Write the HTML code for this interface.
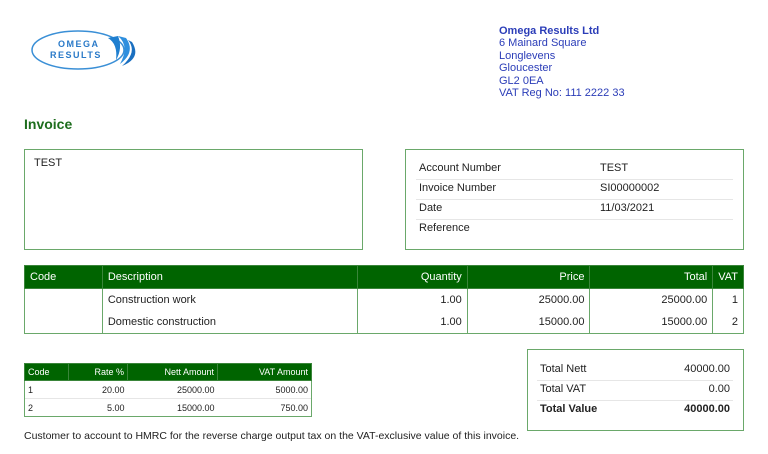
<!DOCTYPE html>
<html><head><style>
*{margin:0;padding:0;box-sizing:border-box}
body{width:768px;height:454px;background:#fff;font-family:"Liberation Sans",Arial,sans-serif;font-size:11px;color:#222;position:relative;overflow:hidden}
.a{position:absolute}
.co{left:499px;top:25px;color:#2b3db8;font-size:11px;line-height:12.4px}
.box{border:1px solid #6aa86a}
.t{position:absolute;border-collapse:collapse}
.t td{border:1px solid #6aa86a;padding:0 5px}
.t tr.h td{background:#006400;color:#fff;border-color:#3a853a}
.r{text-align:right}
.sep{position:absolute;height:1px;background:#e6e6e6}
</style></head><body>
<svg class="a" style="left:28px;top:26px" width="115" height="48" viewBox="0 0 115 48">
<ellipse cx="50" cy="24" rx="46" ry="19" fill="none" stroke="#3a8fd6" stroke-width="1.5"/>
<text x="30" y="21" font-family="Liberation Sans" font-weight="bold" font-size="9" fill="#2a7ac8" letter-spacing="1.5">OMEGA</text>
<text x="22" y="32" font-family="Liberation Sans" font-weight="bold" font-size="9" fill="#2a7ac8" letter-spacing="1.5">RESULTS</text>
<path d="M80 12 Q90 18 88 34 Q95 22 90 10 Z" fill="#1f7fd0"/>
<path d="M90 10 Q102 20 92 38 Q108 26 98 12 Z" fill="#2f8fde"/>
<path d="M100 14 Q110 26 94 40 Q114 32 104 16 Z" fill="#1a6fc0"/>
</svg>
<div class="a co"><b>Omega Results Ltd</b><br>6 Mainard Square<br>Longlevens<br>Gloucester<br>GL2 0EA<br>VAT Reg No: 111 2222 33</div>
<div class="a" style="left:24px;top:116px;color:#1e6e1e;font-weight:bold;font-size:14px">Invoice</div>
<div class="a box" style="left:24px;top:149px;width:339px;height:101px"></div>
<div class="a" style="left:34px;top:157px">TEST</div>
<div class="a box" style="left:405px;top:149px;width:339px;height:101px"></div>
<div class="a" style="left:419px;top:158px;line-height:20px">Account Number<br>Invoice Number<br>Date<br>Reference</div>
<div class="a" style="left:600px;top:158px;line-height:20px">TEST<br>SI00000002<br>11/03/2021</div>
<div class="sep" style="left:416px;top:179px;width:317px"></div>
<div class="sep" style="left:416px;top:199px;width:317px"></div>
<div class="sep" style="left:416px;top:219px;width:317px"></div>
<table class="t" style="left:24px;top:265px;width:720px">
<tr class="h" style="height:23px"><td style="width:78px">Code</td><td style="width:256px">Description</td><td class="r" style="width:110px">Quantity</td><td class="r" style="width:123px">Price</td><td class="r" style="width:123px">Total</td><td class="r">VAT</td></tr>
<tr style="height:22px"><td style="border-bottom:none"></td><td style="border-bottom:none">Construction work</td><td class="r" style="border-bottom:none">1.00</td><td class="r" style="border-bottom:none">25000.00</td><td class="r" style="border-bottom:none">25000.00</td><td class="r" style="border-bottom:none">1</td></tr>
<tr style="height:23px"><td style="border-top:none"></td><td style="border-top:none">Domestic construction</td><td class="r" style="border-top:none">1.00</td><td class="r" style="border-top:none">15000.00</td><td class="r" style="border-top:none">15000.00</td><td class="r" style="border-top:none">2</td></tr>
</table>
<table class="t" style="left:24px;top:363px;width:288px;font-size:9px">
<tr class="h" style="height:17px"><td style="width:44px;padding:0 3px">Code</td><td class="r" style="width:59px;padding:0 3px">Rate %</td><td class="r" style="width:90px;padding:0 3px">Nett Amount</td><td class="r" style="padding:0 3px">VAT Amount</td></tr>
<tr style="height:18px"><td style="border:none;border-left:1px solid #6aa86a;padding:0 3px">1</td><td class="r" style="border:none;padding:0 3px">20.00</td><td class="r" style="border:none;padding:0 3px">25000.00</td><td class="r" style="border:none;border-right:1px solid #6aa86a;padding:0 3px">5000.00</td></tr>
<tr style="height:18px"><td style="border:none;border-left:1px solid #6aa86a;border-bottom:1px solid #6aa86a;border-top:1px solid #e6e6e6;padding:0 3px">2</td><td class="r" style="border:none;border-bottom:1px solid #6aa86a;border-top:1px solid #e6e6e6;padding:0 3px">5.00</td><td class="r" style="border:none;border-bottom:1px solid #6aa86a;border-top:1px solid #e6e6e6;padding:0 3px">15000.00</td><td class="r" style="border:none;border-right:1px solid #6aa86a;border-bottom:1px solid #6aa86a;border-top:1px solid #e6e6e6;padding:0 3px">750.00</td></tr>
</table>
<div class="a box" style="left:527px;top:349px;width:217px;height:82px"></div>
<div class="a" style="left:540px;top:359px;line-height:20px">Total Nett<br>Total VAT<br><b>Total Value</b></div>
<div class="a r" style="left:600px;top:359px;width:130px;line-height:20px">40000.00<br>0.00<br><b>40000.00</b></div>
<div class="sep" style="left:537px;top:380px;width:196px"></div>
<div class="sep" style="left:537px;top:400px;width:196px"></div>
<div class="a" style="left:24px;top:430px;font-size:10.5px">Customer to account to HMRC for the reverse charge output tax on the VAT-exclusive value of this invoice.</div>
</body></html>
